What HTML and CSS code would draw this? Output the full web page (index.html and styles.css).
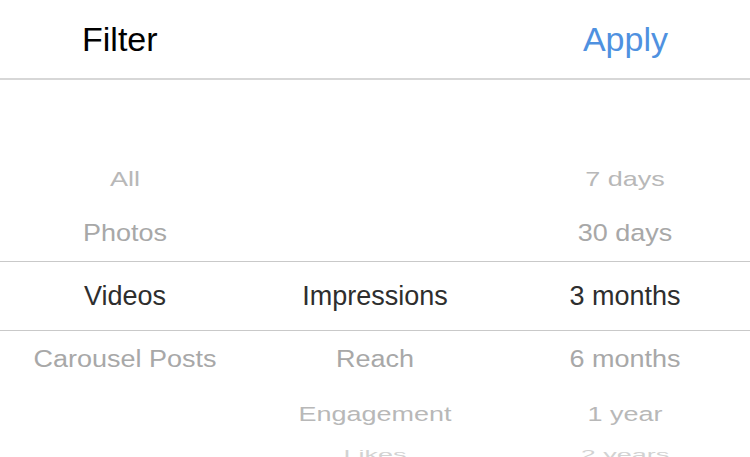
FILE: index.html
```html
<!DOCTYPE html>
<html>
<head>
<meta charset="utf-8">
<title>Filter</title>
<link rel="stylesheet" href="styles.css">
</head>
<body>
<div class="screen">
  <header class="bar">
    <span class="title">Filter</span>
    <span class="apply">Apply</span>
  </header>
  <div class="picker">
    <div class="spacer"></div>
    <div class="row far-up">
      <span class="cell">All</span><span class="cell"></span><span class="cell">7 days</span>
    </div>
    <div class="row near-up">
      <span class="cell">Photos</span><span class="cell"></span><span class="cell">30 days</span>
    </div>
    <div class="row selected">
      <span class="cell">Videos</span><span class="cell">Impressions</span><span class="cell">3 months</span>
    </div>
    <div class="row near-down">
      <span class="cell">Carousel Posts</span><span class="cell">Reach</span><span class="cell">6 months</span>
    </div>
    <div class="row far-down">
      <span class="cell"></span><span class="cell">Engagement</span><span class="cell">1 year</span>
    </div>
    <div class="row edge-down">
      <span class="cell"></span><span class="cell">Likes</span><span class="cell">2 years</span>
    </div>
  </div>
</div>
</body>
</html>
```
FILE: styles.css
```css
html, body {
  margin: 0;
  padding: 0;
  background: #ffffff;
}
body {
  width: 750px;
  height: 457px;
  overflow: hidden;
  font-family: "Liberation Sans", Arial, Helvetica, sans-serif;
}
.screen {
  display: flex;
  flex-direction: column;
  width: 750px;
}
.bar {
  height: 78px;
  display: flex;
  align-items: center;
  justify-content: space-between;
  padding: 0 82px;
  border-bottom: 2px solid #d7d7d7;
  font-size: 34px;
  line-height: 1;
}
.title {
  color: #000000;
}
.apply {
  color: #4f91e0;
}
.picker {
  display: flex;
  flex-direction: column;
}
.spacer {
  height: 73px;
}
.row {
  display: grid;
  grid-template-columns: 250px 250px 250px;
  align-items: center;
  font-size: 27px;
  line-height: 1;
}
.cell {
  display: block;
  text-align: center;
  white-space: nowrap;
  transform-origin: 50% 50%;
}
.far-up { height: 53px; color: #b8b8b8; }
.far-up .cell { transform: scaleY(0.74); }
.near-up { height: 55px; color: #a8a8a8; }
.near-up .cell { transform: scaleY(0.9); }
.selected {
  height: 70px;
  box-sizing: border-box;
  border-top: 1px solid #c9c9c9;
  border-bottom: 1px solid #c9c9c9;
  color: #2e2e2e;
}
.near-down { height: 56px; color: #a8a8a8; }
.near-down .cell { transform: scaleY(0.92); }
.far-down { height: 54px; color: #b8b8b8; }
.far-down .cell { transform: scaleY(0.72); }
.edge-down { height: 20px; color: #d2d2d2; }
.edge-down .cell { transform: scaleY(0.48); }
```
